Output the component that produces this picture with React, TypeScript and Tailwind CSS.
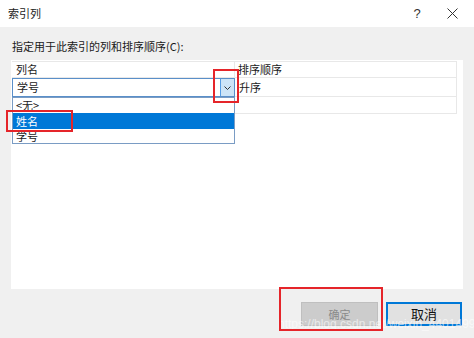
import React from "react";

const font = { fontFamily: '"Microsoft YaHei", "Noto Sans CJK SC", "Noto Sans", sans-serif' };

export default function App() {
  return (
    <div
      className="relative w-[474px] h-[338px] overflow-hidden bg-[#f0f0f0] text-[11px] text-[#1a1a1a] flex flex-col"
      style={font}
    >
      {/* Title bar */}
      <div className="h-[27px] bg-white flex items-center shrink-0">
        <span className="pl-[8px] text-[11px] leading-none text-[#222]">索引列</span>
        <div className="ml-auto flex items-center">
          <span className="w-[20px] text-center text-[13px] text-[#333] leading-none" style={{ fontFamily: '"Liberation Sans", sans-serif' }}>?</span>
          <svg className="ml-[20px] mr-[16px]" width="11" height="11" viewBox="0 0 11 11">
            <path d="M0.5 0.5 L10.5 10.5 M10.5 0.5 L0.5 10.5" stroke="#333" strokeWidth="1" />
          </svg>
        </div>
      </div>

      {/* Body */}
      <div className="flex flex-col px-[11px] pt-[11px] grow">
        <div className="h-[16px] leading-[16px] pl-[1px]">指定用于此索引的列和排序顺序(C):</div>

        {/* Grid panel */}
        <div className="relative mt-[6px] h-[229px] w-[452px] bg-white pt-[1px] pl-[1px]">
          {/* header */}
          <div className="flex h-[17px] border-y border-[#e8e8e8] w-[445px]">
            <div className="w-[223px] pl-[4px] leading-[15px] border-r border-[#e8e8e8]">列名</div>
            <div className="w-[222px] pl-[3px] leading-[15px] border-r border-[#e8e8e8]">排序顺序</div>
          </div>
          {/* row 1 */}
          <div className="flex h-[19px] border-b border-[#e8e8e8] w-[445px]">
            <div className="w-[223px] h-[19px] flex border border-[#5a8fc9]">
              <div className="grow pl-[4px] leading-[17px]">学号</div>
              <div className="w-[14px] h-[17px] bg-[#cce4f7] border-l border-[#569de5] flex items-center justify-center">
                <svg width="7" height="4" viewBox="0 0 7 4">
                  <path d="M0.5 0.5 L3.5 3.5 L6.5 0.5" stroke="#333" strokeWidth="1" fill="none" />
                </svg>
              </div>
            </div>
            <div className="w-[222px] pl-[4px] leading-[18px] border-r border-[#e8e8e8]">升序</div>
          </div>
          {/* row 2 */}
          <div className="flex h-[17px] border-b border-[#e8e8e8] w-[445px]">
            <div className="w-[223px] border-r border-[#e8e8e8]"></div>
            <div className="w-[222px] border-r border-[#e8e8e8]"></div>
          </div>

          {/* dropdown list */}
          <div className="absolute left-[1px] top-[37px] w-[223px] h-[47px] bg-white border border-[#7a9cc4] flex flex-col">
            <div className="h-[15px] leading-[14px] pl-[3px]">&lt;无&gt;</div>
            <div className="h-[16px] leading-[16px] pl-[3px] bg-[#0078d7] text-white">姓名</div>
            <div className="h-[14px] leading-[15px] pl-[3px]">学号</div>
          </div>
        </div>

        {/* Buttons */}
        <div className="flex justify-end gap-[8px] mt-[13px] pr-[1px]">
          <div className="w-[77px] h-[24px] bg-[#cccccc] border border-[#bfbfbf] flex items-center justify-center text-[11px] text-[#8a8a8a]">确定</div>
          <div className="w-[76px] h-[24px] bg-[#e1e1e1] border-2 border-[#0078d7] flex items-center justify-center text-[13px] text-[#111]">取消</div>
        </div>
      </div>

      {/* watermark */}
      <div
        className="absolute left-[278px] top-[318px] text-[12px] leading-none text-white/60 pointer-events-none whitespace-nowrap"
        style={{ fontFamily: '"Liberation Sans", sans-serif' }}
      >
        https://blog.csdn.net/weixin_44014995
      </div>

      {/* red annotation boxes */}
      <div className="absolute left-[213px] top-[69px] w-[26px] h-[34px] border-2 border-[#e5252a]" />
      <div className="absolute left-[6px] top-[110px] w-[67px] h-[22px] border-2 border-[#e5252a]" />
      <div className="absolute left-[279px] top-[287px] w-[104px] h-[44px] border-2 border-[#e5252a]" />
    </div>
  );
}
